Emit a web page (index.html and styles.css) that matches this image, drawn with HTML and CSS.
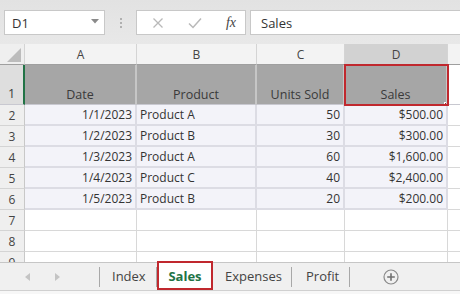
FILE: index.html
```html
<!DOCTYPE html>
<html>
<head>
<meta charset="utf-8">
<link rel="stylesheet" href="styles.css">
</head>
<body>
<div class="app">
  <div class="toolbar">
    <div class="namebox">
      <span class="name">D1</span>
      <svg class="caret" width="8" height="5" viewBox="0 0 8 5"><path d="M0 0h8L4 4.5z" fill="#8a8a8a"/></svg>
    </div>
    <div class="grip"><i></i><i></i><i></i></div>
    <div class="fbuttons">
      <svg width="12" height="12" viewBox="0 0 12 12"><path d="M1.5 1.5l9 9M10.5 1.5l-9 9" stroke="#b9b9b9" stroke-width="1.3" fill="none"/></svg>
      <svg width="14" height="12" viewBox="0 0 14 12"><path d="M1 6.5l4 4L13 1.5" stroke="#b9b9b9" stroke-width="1.5" fill="none"/></svg>
      <span class="fx">fx</span>
    </div>
    <div class="formula">Sales</div>
  </div>

  <div class="sheet">
    <table class="grid">
      <tr class="colhead">
        <td class="corner"><span class="tri"></span></td>
        <td class="ca">A</td>
        <td class="cb">B</td>
        <td class="cc">C</td>
        <td class="cd sel">D</td>
        <td class="ce"></td>
      </tr>
      <tr class="r1">
        <td class="rh rsel">1</td>
        <td>Date</td>
        <td>Product</td>
        <td>Units Sold</td>
        <td class="active">Sales<span class="handle"></span></td>
        <td class="blank"></td>
      </tr>
      <tr class="data">
        <td class="rh">2</td><td class="num">1/1/2023</td><td>Product A</td><td class="num">50</td><td class="num">$500.00</td><td class="blank"></td>
      </tr>
      <tr class="data">
        <td class="rh">3</td><td class="num">1/2/2023</td><td>Product B</td><td class="num">30</td><td class="num">$300.00</td><td class="blank"></td>
      </tr>
      <tr class="data">
        <td class="rh">4</td><td class="num">1/3/2023</td><td>Product A</td><td class="num">60</td><td class="num">$1,600.00</td><td class="blank"></td>
      </tr>
      <tr class="data">
        <td class="rh">5</td><td class="num">1/4/2023</td><td>Product C</td><td class="num">40</td><td class="num">$2,400.00</td><td class="blank"></td>
      </tr>
      <tr class="data">
        <td class="rh">6</td><td class="num">1/5/2023</td><td>Product B</td><td class="num">20</td><td class="num">$200.00</td><td class="blank"></td>
      </tr>
      <tr class="empty">
        <td class="rh">7</td><td></td><td></td><td></td><td></td><td></td>
      </tr>
      <tr class="empty">
        <td class="rh">8</td><td></td><td></td><td></td><td></td><td></td>
      </tr>
      <tr class="empty">
        <td class="rh">9</td><td></td><td></td><td></td><td></td><td></td>
      </tr>
    </table>
  </div>

  <div class="tabbar">
    <div class="nav">
      <svg width="6" height="8" viewBox="0 0 6 8"><path d="M5 0v8L0 4z" fill="#c4c4c4"/></svg>
      <svg width="6" height="8" viewBox="0 0 6 8"><path d="M1 0v8l5-4z" fill="#c4c4c4"/></svg>
    </div>
    <div class="tabs">
      <div class="tab">Index</div>
      <div class="tab current">Sales</div>
      <div class="tab">Expenses</div>
      <div class="tab">Profit</div>
    </div>
    <div class="add">
      <svg width="16" height="16" viewBox="0 0 16 16"><circle cx="8" cy="8" r="7" fill="none" stroke="#8a8a8a" stroke-width="1.2"/><path d="M8 4.2v7.6M4.2 8h7.6" stroke="#707070" stroke-width="1.6"/></svg>
    </div>
  </div>
  <div class="status"></div>
</div>
</body>
</html>
```

FILE: styles.css
```css
* { box-sizing: border-box; }
html, body { margin: 0; padding: 0; }
body {
  width: 460px;
  height: 294px;
  overflow: hidden;
  font-family: "Open Sans", "Noto Sans", sans-serif;
  background: #e6e6e6;
}
.app {
  display: flex;
  flex-direction: column;
  height: 294px;
}

/* toolbar */
.toolbar {
  height: 44px;
  display: flex;
  align-items: flex-start;
  padding: 10px 0 0 4px;
  background: linear-gradient(#e2e2e2, #e8e8e8);
}
.namebox {
  width: 101px;
  height: 25px;
  background: #fff;
  border: 1px solid #c8c8c8;
  display: flex;
  align-items: center;
  justify-content: space-between;
  padding: 0 5px 0 7px;
}
.name { font-size: 13px; color: #333; }
.caret { margin-top: -2px; }
.grip {
  width: 31px;
  height: 25px;
  display: flex;
  flex-direction: column;
  align-items: center;
  justify-content: center;
  gap: 2px;
}
.grip i {
  display: block;
  width: 2px;
  height: 2px;
  background: #b0b0b0;
}
.fbuttons {
  width: 110px;
  height: 25px;
  background: #fff;
  border: 1px solid #c8c8c8;
  display: flex;
  align-items: center;
  justify-content: space-between;
  padding: 0 9px 0 15px;
}
.fx {
  font-family: "Liberation Serif", serif;
  font-style: italic;
  font-size: 14px;
  color: #444;
}
.formula {
  flex: 1;
  margin-left: 4px;
  height: 25px;
  background: #fff;
  border: 1px solid #c8c8c8;
  border-right: none;
  font-size: 13px;
  color: #333;
  padding: 3px 0 0 10px;
}

/* sheet */
.sheet {
  height: 218px;
  overflow: hidden;
  background: #fff;
}
.grid {
  border-collapse: separate;
  border-spacing: 0;
  table-layout: fixed;
  width: 460px;
  font-size: 12px;
  color: #333;
}
.grid td {
  padding: 0 3px;
  white-space: nowrap;
  overflow: hidden;
  border-right: 1px solid #d8d8d8;
  border-bottom: 1px solid #d8d8d8;
}
.colhead td {
  height: 21px;
  background: #f3f3f3;
  text-align: center;
  color: #444;
  border-right: 1px solid #d4d4d4;
  border-bottom: 1px solid #9f9f9f;
  padding-top: 1px;
}
.colhead .corner { width: 25px; position: relative; background: #efefef; }
.colhead .ca { width: 112px; }
.colhead .cb { width: 120px; }
.colhead .cc { width: 88px; }
.colhead .cd { width: 103px; }
.colhead .ce { width: 12px; border-right: none; }
.colhead .sel { background: #d2d2d2; border-bottom-color: #a0a0a0; }
.tri {
  position: absolute;
  right: 3px;
  bottom: 2px;
  width: 0;
  height: 0;
  border-left: 14px solid transparent;
  border-bottom: 14px solid #bcbcbc;
}

.rh {
  background: #efefef;
  text-align: center;
  color: #444;
  border-right: 1px solid #c8c8c8 !important;
}

.r1 td {
  height: 40px;
  background: #a6a6a6;
  vertical-align: bottom;
  text-align: center;
  color: #3a3a3a;
  font-size: 12.5px;
  padding-bottom: 1px;
  border-right: 2px solid #c6c6c6;
  border-bottom: 1px solid #c8c8d0;
}
.r1 td.rh {
  background: #dedede;
  border-right: 2px solid #217346 !important;
  padding-bottom: 2px;
}
.r1 td.blank { background: #fff; border-right: none; }
.r1 td.active {
  position: relative;
  outline: 2px solid #c0282e;
  outline-offset: -1px;
}
.handle {
  position: absolute;
  right: -3px;
  bottom: -3px;
  width: 5px;
  height: 5px;
  background: #a0282c;
  border: 1px solid #fff;
}

.data td {
  height: 21px;
  background: #f3f3f9;
  border-right: 2px solid #dcdce4;
  border-bottom: 2px solid #dcdce4;
}
.data td.rh { background: #efefef; border-bottom: 1px solid #d4d4d4; }
.data td.blank { background: #fff; border-right: none; border-bottom: 1px solid #d8d8d8; }
.num { text-align: right; }

.empty td { height: 21px; }
.empty td.rh { border-bottom: 1px solid #d4d4d4; }
.empty td:last-child { border-right: none; }

/* tab bar */
.tabbar {
  height: 28px;
  background: #f0f0f0;
  border-top: 1px solid #c6c6c6;
  display: flex;
  align-items: center;
  font-size: 13px;
  color: #444;
}
.nav {
  width: 100px;
  height: 20px;
  display: flex;
  align-items: center;
  gap: 23px;
  padding-left: 25px;
  border-right: 1px solid #a8a8a8;
}
.tabs {
  display: flex;
  align-items: center;
  height: 100%;
}
.tab {
  height: 20px;
  line-height: 19px;
  padding: 0 12px;
  border-right: 1px solid #a8a8a8;
}
.tab:first-child { width: 57px; }
.tab.current {
  width: 56px;
  height: 29px;
  margin-top: -2px;
  line-height: 27px;
  background: #fff;
  color: #217346;
  font-weight: bold;
  text-align: center;
  border: 2px solid #c0282e;
  padding: 0;
}
.tab:nth-child(2) + .tab { width: 79px; }
.tab:last-child { width: 58px; padding-left: 14px; }
.add {
  margin-left: 33px;
  display: flex;
  align-items: center;
}
.status {
  height: 4px;
  background: #f7f7f7;
  border-top: 1px solid #d0d0d0;
}
```
